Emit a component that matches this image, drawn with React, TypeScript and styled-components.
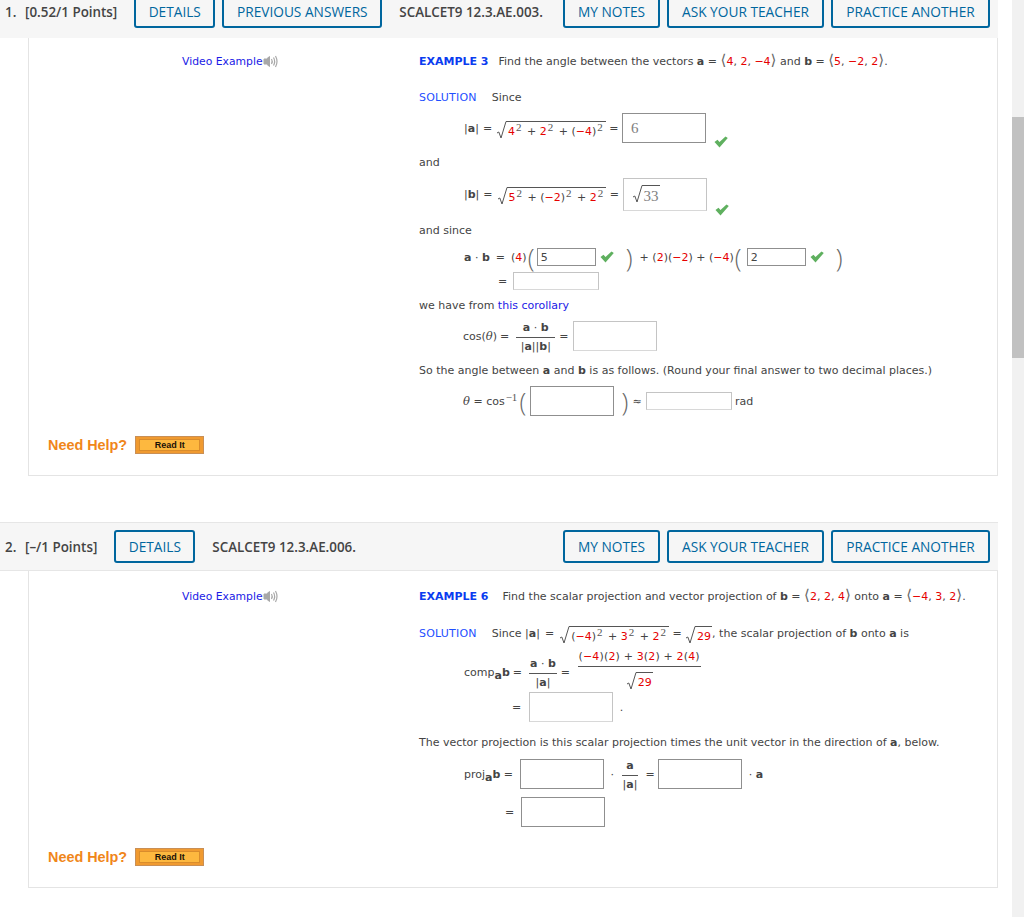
import React from 'react';
import styled, {createGlobalStyle} from 'styled-components';

const Global = createGlobalStyle`
  html, body {
    margin: 0;
    padding: 0;
    height: 917px;
    overflow: hidden;
    background: #fff;
  }
`

const Page = styled.div`
  width: 998px;
  margin-top: -13px;
  font-family: "DejaVu Sans", Verdana, sans-serif;
  font-size: 11px;
  color: #444;
`
const Track = styled.div`
  position: fixed;
  top: 0;
  right: 0;
  width: 12px;
  height: 917px;
  background: #f1f1f1;
`
const Thumb = styled.div`
  margin-top: 117px;
  height: 241px;
  background: #c1c1c1;
`

const Header = styled.div<{ $line?: boolean }>`
  display: flex;
  align-items: center;
  height: ${p => p.$line ? 49 : 51}px;
  box-sizing: border-box;
  padding: 0 8px ${p => p.$line ? 0 : 2}px 5px;
  background: #f6f6f6;
  border-top: ${p => p.$line ? '1px solid #e6e6e6' : 'none'};
  border-bottom: ${p => p.$line ? '1px solid #e6e6e6' : 'none'};
  font-family: "Open Sans", sans-serif;
  font-size: 13.4px;
  font-weight: 600;
  color: #444;
  white-space: pre;
`
const Num = styled.span`
  width: 20px;
`
const Points = styled.span`
  margin-right: 17px;
`
const Code = styled.span`
  margin-left: 17px;
  margin-right: auto;
`
const NavButton = styled.div<{ $w: number }>`
  display: flex;
  align-items: center;
  justify-content: center;
  box-sizing: border-box;
  width: ${p => p.$w}px;
  height: 33px;
  margin-left: 7px;
  border: 2px solid #00669e;
  border-radius: 3px;
  font-size: 13.7px;
  font-weight: 400;
  color: #00669e;
`
const FirstButton = styled(NavButton)`
  margin-left: 0;
`

const Panel = styled.div`
  margin-left: 28px;
  border: 1px solid #e4e4e4;
  border-top: none;
  padding-bottom: 21px;
`
const Columns = styled.div`
  display: flex;
`
const Aside = styled.div<{ $top: number }>`
  display: flex;
  align-items: center;
  width: 390px;
  height: 18px;
  box-sizing: border-box;
  flex: none;
  margin-top: ${p => p.$top}px;
  padding-left: 153px;
  font-size: 10.8px;
  color: #1a1ae6;
`
const Work = styled.div`
  display: flex;
  flex-direction: column;
`
const Line = styled.div<{ $mt: number; $h?: number; $in?: number }>`
  display: flex;
  align-items: center;
  height: ${p => p.$h || 18}px;
  margin-top: ${p => p.$mt}px;
  padding-left: ${p => p.$in || 0}px;
  white-space: pre;
`
const Bold = styled.b`
  font-weight: 700;
`
const Red = styled.span`
  color: #e60000;
`
const Blue = styled.span`
  color: #1a1ae6;
`
const Angle = styled.span`
  font-size: 15px;
  line-height: 0;
  color: #666;
`
const Label = styled.span<{ $gap: number }>`
  font-weight: 700;
  color: #0a3cf0;
  margin-right: ${p => p.$gap}px;
`
const Solution = styled.span`
  color: #1f4fff;
  letter-spacing: 0.2px;
  margin-right: 15px;
`
const Eq = styled.span<{ $m: number }>`
  margin: 0 ${p => p.$m}px;
`
const Sup = styled.sup`
  font-family: "Liberation Serif", serif;
  font-size: 11px;
  line-height: 0;
  vertical-align: 4px;
  margin: 0 2px 0 1px;
  color: #555;
`
const Sub = styled.span`
  font-size: 11px;
  font-weight: 700;
  position: relative;
  top: 3px;
`
const Ital = styled.i`
  font-family: "DejaVu Serif", serif;
  font-size: 11.5px;
`
const RadWrap = styled.span`
  display: inline-flex;
  align-items: flex-end;
  margin-top: 3px;
`
const Radicand = styled.span`
  display: inline-block;
  border-top: 1px solid #555;
  padding: 3px 1px 0 1px;
  line-height: 14px;
`
const Frac = styled.span<{ $drop?: number; $w?: number }>`
  display: inline-flex;
  flex-direction: column;
  align-items: center;
  min-width: ${p => p.$w || 0}px;
  margin: ${p => p.$drop || 0}px 4px 0;
`
const FracTop = styled.span<{ $ls?: number }>`
  padding: 0 1px 2px;
  line-height: 14px;
  letter-spacing: ${p => p.$ls || 0}px;
`
const FracBottom = styled.span`
  align-self: stretch;
  text-align: center;
  border-top: 1px solid #555;
  padding: 2px 1px 0;
  line-height: 14px;
`
const AnswerBox = styled.span<{ $w: number; $h: number; $dark?: boolean; $ml?: number }>`
  display: inline-flex;
  align-items: center;
  box-sizing: border-box;
  flex: none;
  width: ${p => p.$w}px;
  height: ${p => p.$h}px;
  margin-left: ${p => p.$ml || 0}px;
  padding-left: 3px;
  background: #fff;
  border: 1px solid ${p => p.$dark ? '#8f8f8f' : '#c4c4c4'};
  border-bottom-color: ${p => p.$dark ? '#8f8f8f' : '#d8d8d8'};
`
const Written = styled.span`
  font-family: "Liberation Serif", serif;
  font-size: 15px;
  color: #808080;
  padding-left: 5px;
`
const Paren = styled.span<{ $ml?: number }>`
  display: inline-block;
  width: 7px;
  margin-left: ${p => p.$ml || 0}px;
  font-family: "Open Sans", sans-serif;
  font-size: 25px;
  font-weight: 300;
  line-height: 26px;
  color: #666;
`
const CheckWrap = styled.span<{ $drop?: number; $ml?: number }>`
  display: inline-flex;
  margin-top: ${p => p.$drop || 0}px;
  margin-left: ${p => p.$ml || 0}px;
`
const HelpRow = styled.div<{ $mt: number }>`
  display: flex;
  align-items: center;
  height: 18px;
  margin-top: ${p => p.$mt}px;
  padding-left: 19px;
`
const HelpText = styled.span`
  font-family: "Liberation Sans", sans-serif;
  font-size: 14.4px;
  font-weight: 700;
  color: #f0861a;
  margin-right: 8px;
`
const ReadIt = styled.div`
  box-sizing: border-box;
  width: 69px;
  height: 18px;
  padding: 2px 3px;
  background: #f09a30;
  border: 1px solid #c98f55;
`
const ReadItInner = styled.div`
  display: flex;
  align-items: center;
  justify-content: center;
  height: 100%;
  box-sizing: border-box;
  background: #fdb83f;
  border: 1px solid #d98c2c;
  font-family: "Liberation Sans", sans-serif;
  font-size: 9px;
  font-weight: 700;
  color: #1a1207;
`
const Question2 = styled.div`
  margin-top: 46px;
`

const Check = ({drop, ml}: { drop?: number; ml?: number }) => (
  <CheckWrap $drop={drop} $ml={ml}>
    <svg width="14" height="12" viewBox="0 0 14 12">
      <path d="M0.5 6 L3.5 3.8 L5.5 6 L11.5 0.5 L13.8 2 L5.5 11.5 Z" fill="#5fb05f"/>
    </svg>
  </CheckWrap>
)

const Speaker = () => (
  <svg width="16" height="15" viewBox="0 0 16 15" fill="none" stroke="#a8a8a8">
    <path d="M1 5 H3.5 L6.5 2.5 V12.5 L3.5 10 H1 Z" fill="#a8a8a8"/>
    <path d="M8.5 5 Q10 7.5 8.5 10" strokeWidth="1.2"/>
    <path d="M10.5 3.5 Q12.8 7.5 10.5 11.5" strokeWidth="1.2"/>
    <path d="M12.5 2 Q15.5 7.5 12.5 13" strokeWidth="1.2"/>
  </svg>
)

const Root = ({children}: { children: React.ReactNode }) => (
  <RadWrap>
    <svg width="11" height="18" viewBox="0 0 11 18" fill="none" stroke="#555">
      <path d="M1 12 L2.8 11 L5 17 L10 0.5 H11" strokeWidth="1"/>
    </svg>
    <Radicand>{children}</Radicand>
  </RadWrap>
)

const Help = ({mt}: { mt: number }) => (
  <HelpRow $mt={mt}>
    <HelpText>Need Help?</HelpText>
    <ReadIt><ReadItInner>Read It</ReadItInner></ReadIt>
  </HelpRow>
)

const Video = ({top}: { top: number }) => (
  <Aside $top={top}>Video Example<Speaker/></Aside>
)

const App = () => {
  return (
    <Page>
      <Global/>
      <Track><Thumb/></Track>

      <Header>
        <Num>1.</Num>
        <Points>[0.52/1 Points]</Points>
        <FirstButton $w={81}>DETAILS</FirstButton>
        <NavButton $w={160}>PREVIOUS ANSWERS</NavButton>
        <Code>SCALCET9 12.3.AE.003.</Code>
        <NavButton $w={97}>MY NOTES</NavButton>
        <NavButton $w={157}>ASK YOUR TEACHER</NavButton>
        <NavButton $w={159}>PRACTICE ANOTHER</NavButton>
      </Header>
      <Panel>
        <Columns>
          <Video top={14}/>
          <Work>
            <Line $mt={14}>
              <Label $gap={10}>EXAMPLE 3</Label>
              <span>Find the angle between the vectors <Bold>a</Bold> = <Angle>⟨</Angle><Red>4</Red>, <Red>2</Red>, <Red>−4</Red><Angle>⟩</Angle> and <Bold>b</Bold> = <Angle>⟨</Angle><Red>5</Red>, <Red>−2</Red>, <Red>2</Red><Angle>⟩</Angle>.</span>
            </Line>
            <Line $mt={18}><Solution>SOLUTION</Solution><span>Since</span></Line>
            <Line $mt={7} $h={30} $in={45}>
              <span>|<Bold>a</Bold>|</span><Eq $m={4}>=</Eq>
              <Root><Red>4</Red><Sup>2</Sup> + <Red>2</Red><Sup>2</Sup> + (<Red>−4</Red>)<Sup>2</Sup></Root>
              <span> = </span>
              <AnswerBox $w={84} $h={30} $dark><Written>6</Written></AnswerBox>
              <Check drop={28} ml={8}/>
            </Line>
            <Line $mt={10}>and</Line>
            <Line $mt={7} $h={33} $in={45}>
              <span>|<Bold>b</Bold>|</span><Eq $m={4}>=</Eq>
              <Root><Red>5</Red><Sup>2</Sup> + (<Red>−2</Red>)<Sup>2</Sup> + <Red>2</Red><Sup>2</Sup></Root>
              <span> = </span>
              <AnswerBox $w={84} $h={33}><Written><Root>33</Root></Written></AnswerBox>
              <Check drop={31} ml={8}/>
            </Line>
            <Line $mt={10}>and since</Line>
            <Line $mt={5} $h={26} $in={45}>
              <span><Bold>a</Bold> · <Bold>b</Bold></span><Eq $m={6}>=</Eq>
              <span>(<Red>4</Red>)</span>
              <Paren $ml={1}>(</Paren>
              <AnswerBox $w={59} $h={18} $dark $ml={2}>5</AnswerBox>
              <Check ml={4}/>
              <Paren $ml={12}>)</Paren>
              <span>  + (<Red>2</Red>)(<Red>−2</Red>) + (<Red>−4</Red>)</span>
              <Paren $ml={1}>(</Paren>
              <AnswerBox $w={59} $h={18} $dark $ml={5}>2</AnswerBox>
              <Check ml={4}/>
              <Paren $ml={12}>)</Paren>
            </Line>
            <Line $mt={2} $in={79}>
              <span>= </span>
              <AnswerBox $w={86} $h={18} $ml={2}/>
            </Line>
            <Line $mt={6}><span>we have from <Blue>this corollary</Blue></span></Line>
            <Line $mt={4} $h={36} $in={44}>
              <span>cos(<Ital>θ</Ital>)</span><Eq $m={3}>=</Eq>
              <Frac $drop={3} $w={39}>
                <FracTop><Bold>a</Bold> · <Bold>b</Bold></FracTop>
                <FracBottom>|<Bold>a</Bold>||<Bold>b</Bold>|</FracBottom>
              </Frac>
              <span>= </span>
              <AnswerBox $w={84} $h={30} $ml={1}/>
            </Line>
            <Line $mt={7}><span>So the angle between <Bold>a</Bold> and <Bold>b</Bold> is as follows. (Round your final answer to two decimal places.)</span></Line>
            <Line $mt={7} $h={30} $in={44}>
              <span><Ital>θ</Ital> = cos<Sup>−1</Sup></span>
              <Paren>(</Paren>
              <AnswerBox $w={84} $h={30} $dark $ml={4}/>
              <Paren $ml={7}>)</Paren>
              <Eq $m={4}>≈</Eq>
              <AnswerBox $w={86} $h={18}/>
              <span> rad</span>
            </Line>
          </Work>
        </Columns>
        <Help mt={20}/>
      </Panel>

      <Question2>
        <Header $line>
          <Num>2.</Num>
          <Points>[–/1 Points]</Points>
          <FirstButton $w={81}>DETAILS</FirstButton>
          <Code>SCALCET9 12.3.AE.006.</Code>
          <NavButton $w={97}>MY NOTES</NavButton>
          <NavButton $w={157}>ASK YOUR TEACHER</NavButton>
          <NavButton $w={159}>PRACTICE ANOTHER</NavButton>
        </Header>
        <Panel>
          <Columns>
            <Video top={16}/>
            <Work>
              <Line $mt={16}>
                <Label $gap={14}>EXAMPLE 6</Label>
                <span>Find the scalar projection and vector projection of <Bold>b</Bold> = <Angle>⟨</Angle><Red>2</Red>, <Red>2</Red>, <Red>4</Red><Angle>⟩</Angle> onto <Bold>a</Bold> = <Angle>⟨</Angle><Red>−4</Red>, <Red>3</Red>, <Red>2</Red><Angle>⟩</Angle>.</span>
              </Line>
              <Line $mt={16} $h={24}>
                <Solution>SOLUTION</Solution>
                <span>Since |<Bold>a</Bold>|</span><Eq $m={5}>=</Eq>
                <Root>(<Red>−4</Red>)<Sup>2</Sup> + <Red>3</Red><Sup>2</Sup> + <Red>2</Red><Sup>2</Sup></Root>
                <span> = </span>
                <Root><Red>29</Red></Root>
                <span>, the scalar projection of <Bold>b</Bold> onto <Bold>a</Bold> is</span>
              </Line>
              <Line $mt={11} $h={32} $in={45}>
                <span>comp<Sub>a</Sub><Bold>b</Bold></span><Eq $m={3}>=</Eq>
                <Frac $drop={3}>
                  <FracTop><Bold>a</Bold> · <Bold>b</Bold></FracTop>
                  <FracBottom>|<Bold>a</Bold>|</FracBottom>
                </Frac>
                <span>= </span>
                <Frac>
                  <FracTop $ls={0.15}>(<Red>−4</Red>)(<Red>2</Red>) + <Red>3</Red>(<Red>2</Red>) + <Red>2</Red>(<Red>4</Red>)</FracTop>
                  <FracBottom><Root><Red>29</Red></Root></FracBottom>
                </Frac>
              </Line>
              <Line $mt={4} $h={30} $in={93}>
                <span>= </span>
                <AnswerBox $w={84} $h={30} $ml={4}/>
                <span>  .</span>
              </Line>
              <Line $mt={11}><span>The vector projection is this scalar projection times the unit vector in the direction of <Bold>a</Bold>, below.</span></Line>
              <Line $mt={8} $h={30} $in={45}>
                <span>proj<Sub>a</Sub><Bold>b</Bold> = </span>
                <AnswerBox $w={84} $h={30} $dark $ml={3}/>
                <span>  · </span>
                <Frac $drop={3}>
                  <FracTop><Bold>a</Bold></FracTop>
                  <FracBottom>|<Bold>a</Bold>|</FracBottom>
                </Frac>
                <Eq $m={3}>=</Eq>
                <AnswerBox $w={84} $h={30} $dark/>
                <span>  · <Bold>a</Bold></span>
              </Line>
              <Line $mt={8} $h={30} $in={86}>
                <span>= </span>
                <AnswerBox $w={84} $h={30} $dark $ml={3}/>
              </Line>
            </Work>
          </Columns>
          <Help mt={21}/>
        </Panel>
      </Question2>
    </Page>
  );
};

export default App;
